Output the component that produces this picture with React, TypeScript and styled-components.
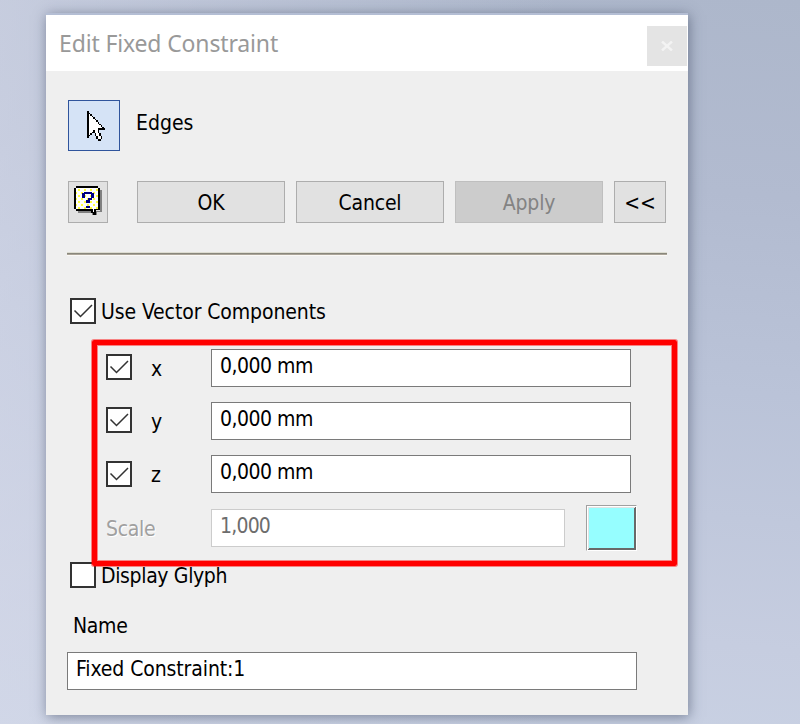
import React from "react";
import styled, { createGlobalStyle } from "styled-components";

const GlobalStyle = createGlobalStyle`
  * { box-sizing: border-box; }
  html, body { margin: 0; padding: 0; }
  body { font-family: "DejaVu Sans Condensed", "DejaVu Sans", Tahoma, sans-serif; font-stretch: condensed; font-size: 21px; color: #000; }
  button, input { font: inherit; margin: 0; }
`;

const Desktop = styled.main`
  width: 800px;
  height: 724px;
  padding: 13px 0 0 46px;
  overflow: hidden;
  background:
    linear-gradient(90deg, rgba(214, 218, 234, 0.6) 0, rgba(214, 218, 234, 0) 70%),
    linear-gradient(185deg, #adb7cb 0, #b2bbd0 25%, #bac3d8 50%, #c6cde0 82%, #c9d2e4 100%);
`;

const Dialog = styled.section`
  width: 642px;
  height: 702px;
  border-top: 2px solid #b4bed4;
  background: #efefef;
  box-shadow: 1px 2px 12px rgba(55, 65, 90, 0.55);
`;

const TitleBar = styled.header`
  display: flex;
  justify-content: space-between;
  height: 56px;
  padding: 11px 1px 0 13px;
  background: #fff;
`;

const Title = styled.h1`
  margin: 0;
  font: 400 23px/34px "Noto Sans", sans-serif;
  letter-spacing: -0.15px;
  color: #999;
`;

const CloseButton = styled.button`
  display: grid;
  place-items: center;
  width: 40px;
  height: 40px;
  padding: 0;
  border: 0;
  background: #e4e4e4;
`;

const Body = styled.div`
  padding: 29px 21px 0;
`;

const SelectRow = styled.div`
  display: flex;
  gap: 16px;
  height: 51px;
  padding-left: 1px;
  line-height: 47px;
`;

const SelectTool = styled.button`
  display: flex;
  align-items: flex-start;
  width: 52px;
  height: 51px;
  padding: 10px 0 0 18px;
  border: 1px solid #2f549c;
  background: #d5e3f6;
`;

const ButtonRow = styled.div`
  display: flex;
  gap: 11px;
  margin: 30px 0 29px 1px;
`;

const Button = styled.button<{ $width: number }>`
  width: ${(p) => p.$width}px;
  height: 42px;
  padding: 1px 0 0;
  border: 1px solid #adadad;
  background: #e1e1e1;
  color: #000;
  letter-spacing: -0.2px;
  &:disabled { border-color: #bfbfbf; background: #ccc; color: #838383; }
`;

const HelpButton = styled(Button)`
  display: flex;
  align-items: flex-start;
  margin-right: 18px;
  padding: 4px 0 0 5px;
`;

const Divider = styled.hr`
  width: 600px;
  height: 4px;
  margin: 0 0 42px;
  border: 0;
  background: linear-gradient(#deddd2 1px, #89877c 1px, #89877c 2px, #aaa498 2px, #aaa498 3px, #fbf9f6 3px);
`;

const CheckLine = styled.label<{ $spacing: number }>`
  display: flex;
  gap: 5px;
  height: 26px;
  margin-left: 3px;
  line-height: 28px;
  letter-spacing: ${(p) => p.$spacing}px;
`;

const CheckBox = styled.span`
  flex: none;
  width: 26px;
  height: 26px;
  border: 2px solid #333;
  background: #fff;
  line-height: 0;
`;

const Components = styled.div`
  display: grid;
  grid-template-rows: 53px 53px 54px 53px;
  margin: 25px 0 0 39px;
`;

const Row = styled.div`
  display: grid;
  grid-template-columns: 45px 60px auto 1fr;
  align-items: start;
`;

const RowCheck = styled(CheckBox)<{ $offset: number }>`
  margin-top: ${(p) => p.$offset}px;
`;

const RowLabel = styled.span`
  line-height: 40px;
  letter-spacing: -0.3px;
`;

const ScaleLabel = styled(RowLabel)`
  grid-column: span 2;
  color: #a0a0a0;
  text-shadow: 1px 1px 0 #fff;
`;

const Field = styled.input<{ $width: number; $spacing: number }>`
  width: ${(p) => p.$width}px;
  height: 38px;
  padding: 0 8px 4px;
  border: 1px solid #7a7a7a;
  border-radius: 0;
  background: #fff;
  color: #000;
  letter-spacing: ${(p) => p.$spacing}px;
  outline: 0;
  &:disabled { border-color: #ccc; color: #6d6d6d; }
`;

const Swatch = styled.button`
  width: 51px;
  height: 46px;
  margin: -4px 0 0 21px;
  padding: 0;
  border: 1px solid;
  border-color: #a0a0a0 #fff #fff #a0a0a0;
  background: #96feff;
  box-shadow: inset 1px 1px #fff, inset -1px -1px #696969, inset 2px 2px #e3e3e3, inset -2px -2px #696969;
`;

const NameLabel = styled.label`
  display: block;
  margin: 22px 0 9px 6px;
  line-height: 33px;
  letter-spacing: -0.3px;
`;

const Frame = styled.div`
  position: absolute;
  left: 92px;
  top: 340px;
  width: 585px;
  height: 226px;
  border: 5px solid #f00;
  border-radius: 2px;
  box-shadow: 0 0 0 1px rgba(255, 0, 0, 0.45), inset 0 0 0 1px rgba(255, 0, 0, 0.45);
  pointer-events: none;
`;

const cursorRows = [
  "X", "XX", "X.X", "X..X", "X...X", "X....X", "X.....X", "X......X", "X.......X",
  "X........X", "X.........X", "X......XXXXX", "X...X..X", "X..XX..X", "X.X  X..X",
  "XX   X..X", "X     X..X", "      X..X", "       XX",
];

const CursorIcon = () => (
  <svg width="18" height="30" viewBox="0 0 12 19" preserveAspectRatio="none" shapeRendering="crispEdges">
    {cursorRows.flatMap((row, y) =>
      [...row].map((c, x) =>
        c === " " ? null : <rect key={`${x}-${y}`} x={x} y={y} width="1" height="1" fill={c === "X" ? "#000" : "#fff"} />
      )
    )}
  </svg>
);

const HelpIcon = () => (
  <svg width="28" height="30" viewBox="0 0 28 30" shapeRendering="crispEdges">
    <defs>
      <pattern id="dots" x="4" y="3" width="6" height="6" patternUnits="userSpaceOnUse">
        <path d="M0 0h2v2H0zM3 3h2v2H3z" fill="#ffff3c" />
      </pattern>
    </defs>
    <path d="M26 4h2v22h-5v3h-5v-2H4v-2h22z" fill="#808080" />
    <path d="M2 0h22v2h2v22h-4v5h-3v-2h-2v-2H2v-2H0V2h2z" fill="#000" />
    <path d="M2 2h22v21h-4v3h-1v-3H2z" fill="#fff" />
    <path d="M2 2h22v21H2z" fill="url(#dots)" />
    <path d="M10 6h8v1h2v5h-2v2h-2v3h-4v-3h2v-2h3V8h-6v4H8V7h2zM12 20h4v2h-4z" fill="#000080" />
  </svg>
);

const Check = () => (
  <svg width="22" height="22" viewBox="0 0 22 22" fill="none" stroke="#333" strokeWidth="1.5">
    <path d="M2.5 10.5 8.5 16.5 20 5" />
  </svg>
);

const axes = [
  { name: "x", offset: 5 },
  { name: "y", offset: 5 },
  { name: "z", offset: 6 },
];

export default function App() {
  return (
    <Desktop>
      <GlobalStyle />
      <Dialog>
        <TitleBar>
          <Title>Edit Fixed Constraint</Title>
          <CloseButton aria-label="Close">
            <svg width="12" height="10" viewBox="0 0 12 10" stroke="#f3f3f3" strokeWidth="2.4">
              <path d="M1 .5 11 9.5M11 .5 1 9.5" />
            </svg>
          </CloseButton>
        </TitleBar>
        <Body>
          <SelectRow>
            <SelectTool aria-label="Select edges"><CursorIcon /></SelectTool>
            <span>Edges</span>
          </SelectRow>
          <ButtonRow>
            <HelpButton $width={40} aria-label="Help"><HelpIcon /></HelpButton>
            <Button $width={148}>OK</Button>
            <Button $width={148}>Cancel</Button>
            <Button $width={148} disabled>Apply</Button>
            <Button $width={52}>&lt;&lt;</Button>
          </ButtonRow>
          <Divider />
          <CheckLine $spacing={-0.1}>
            <CheckBox><Check /></CheckBox>
            <span>Use Vector Components</span>
          </CheckLine>
          <Components>
            {axes.map((a) => (
              <Row key={a.name}>
                <RowCheck $offset={a.offset}><Check /></RowCheck>
                <RowLabel>{a.name}</RowLabel>
                <Field $width={420} $spacing={-0.5} defaultValue="0,000 mm" />
              </Row>
            ))}
            <Row>
              <ScaleLabel>Scale</ScaleLabel>
              <Field $width={354} $spacing={-0.8} defaultValue="1,000" disabled />
              <Swatch aria-label="Colour" />
            </Row>
          </Components>
          <CheckLine $spacing={-0.35}>
            <CheckBox />
            <span>Display Glyph</span>
          </CheckLine>
          <NameLabel>Name</NameLabel>
          <Field $width={570} $spacing={-0.1} defaultValue="Fixed Constraint:1" />
        </Body>
      </Dialog>
      <Frame />
    </Desktop>
  );
}
